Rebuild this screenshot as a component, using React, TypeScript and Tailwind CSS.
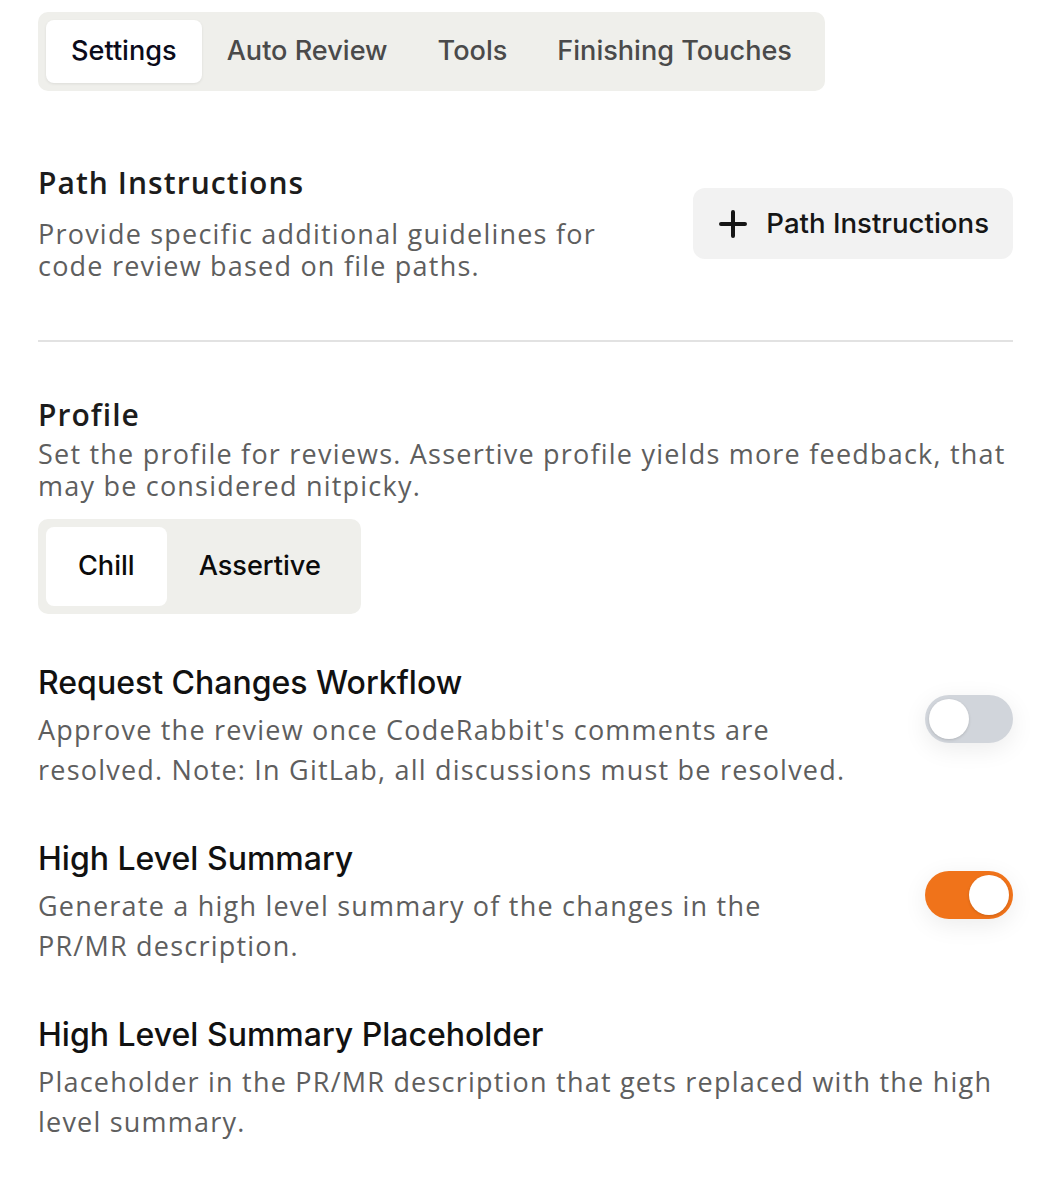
import React, { useState } from 'react';

const poppins = { fontFamily: '"Open Sans", "DejaVu Sans", sans-serif' };

const tabs = ['Settings', 'Auto Review', 'Tools', 'Finishing Touches'];

const Toggle: React.FC<{ on: boolean; onClick: () => void }> = ({ on, onClick }) => (
  <button
    onClick={onClick}
    className={`flex h-[48px] w-[88px] shrink-0 items-center rounded-full p-[4px] shadow-[0_6px_24px_rgba(0,0,0,0.08)] ${
      on ? 'justify-end bg-[#f0731a]' : 'justify-start bg-[#d1d5db]'
    }`}
  >
    <span className="h-[40px] w-[40px] rounded-full bg-white shadow-[0_1px_3px_rgba(0,0,0,0.15)]" />
  </button>
);

const ToggleRow: React.FC<{ title: string; desc: string; on: boolean; onClick: () => void }> = ({
  title,
  desc,
  on,
  onClick,
}) => (
  <div className="flex items-start justify-between">
    <div className="max-w-[815px]">
      <h3 className="text-[32px] font-medium leading-[38px] text-[#111]">{title}</h3>
      <p style={poppins} className="mt-[8px] text-[27px] leading-[40px] tracking-[0.045em] text-[#5e5e5e]">
        {desc}
      </p>
    </div>
    <div className="pt-[31px]">
      <Toggle on={on} onClick={onClick} />
    </div>
  </div>
);

const App: React.FC = () => {
  const [tab, setTab] = useState('Settings');
  const [profile, setProfile] = useState('Chill');
  const [requestChanges, setRequestChanges] = useState(false);
  const [summary, setSummary] = useState(true);

  return (
    <div className="min-h-screen bg-white px-[38px] pt-[12px]" style={{ fontFamily: 'Inter, sans-serif' }}>
      <div className="w-[975px]">
        {/* Tabs */}
        <div className="inline-flex rounded-[10px] bg-[#efefeb] p-[8px]">
          {tabs.map((t) => (
            <button
              key={t}
              onClick={() => setTab(t)}
              className={`h-[63px] rounded-[8px] px-[25px] text-[27.1px] font-medium ${
                tab === t ? 'bg-white text-[#0b0b1a] shadow-[0_1px_3px_rgba(0,0,0,0.08)]' : 'text-[#4a4a4a]'
              }`}
            >
              {t}
            </button>
          ))}
        </div>

        {/* Path Instructions */}
        <div className="mt-[72px] flex items-start justify-between">
          <div className="max-w-[600px]">
            <h2 style={poppins} className="text-[30px] font-semibold leading-[40px] tracking-[0.035em] text-[#1c1c1c]">
              Path Instructions
            </h2>
            <p style={poppins} className="mt-[15px] text-[27px] leading-[32px] tracking-[0.045em] text-[#5e5e5e]">
              Provide specific additional guidelines for code review based on file paths.
            </p>
          </div>
          <button className="mt-[25px] flex h-[71px] items-center gap-[19px] rounded-[12px] bg-[#f2f2f2] pl-[26px] pr-[24px] text-[27.6px] font-medium text-[#161616]">
            <svg width="28" height="28" viewBox="0 0 28 28" fill="none" stroke="currentColor" strokeWidth="4" strokeLinecap="round">
              <path d="M14 2v24M2 14h24" />
            </svg>
            Path Instructions
          </button>
        </div>

        <div className="mt-[58px] h-[2px] bg-[#e2e2e2]" />

        {/* Profile */}
        <div className="mt-[53px]">
          <h2 style={poppins} className="text-[30px] font-semibold leading-[40px] tracking-[0.035em] text-[#1c1c1c]">
            Profile
          </h2>
          <p style={poppins} className="mt-[3px] text-[27px] leading-[32px] tracking-[0.045em] text-[#5e5e5e]">
            Set the profile for reviews. Assertive profile yields more feedback, that may be considered nitpicky.
          </p>
          <div className="mt-[17px] inline-flex rounded-[10px] bg-[#efefeb] p-[8px]">
            {['Chill', 'Assertive'].map((p) => (
              <button
                key={p}
                onClick={() => setProfile(p)}
                className={`h-[79px] rounded-[8px] px-[32px] text-[27.1px] font-medium text-[#0b0b0b] ${
                  profile === p ? 'bg-white' : ''
                }`}
              >
                {p}
              </button>
            ))}
          </div>
        </div>

        <div className="mt-[50px] flex flex-col gap-[50px]">
          <ToggleRow
            title="Request Changes Workflow"
            desc="Approve the review once CodeRabbit's comments are resolved. Note: In GitLab, all discussions must be resolved."
            on={requestChanges}
            onClick={() => setRequestChanges(!requestChanges)}
          />
          <ToggleRow
            title="High Level Summary"
            desc="Generate a high level summary of the changes in the PR/MR description."
            on={summary}
            onClick={() => setSummary(!summary)}
          />
          <div>
            <h3 className="text-[32px] font-medium leading-[38px] text-[#111]">High Level Summary Placeholder</h3>
            <p style={poppins} className="mt-[8px] text-[27px] leading-[40px] tracking-[0.045em] text-[#5e5e5e]">
              Placeholder in the PR/MR description that gets replaced with the high level summary.
            </p>
          </div>
        </div>
      </div>
    </div>
  );
};

export default App;
